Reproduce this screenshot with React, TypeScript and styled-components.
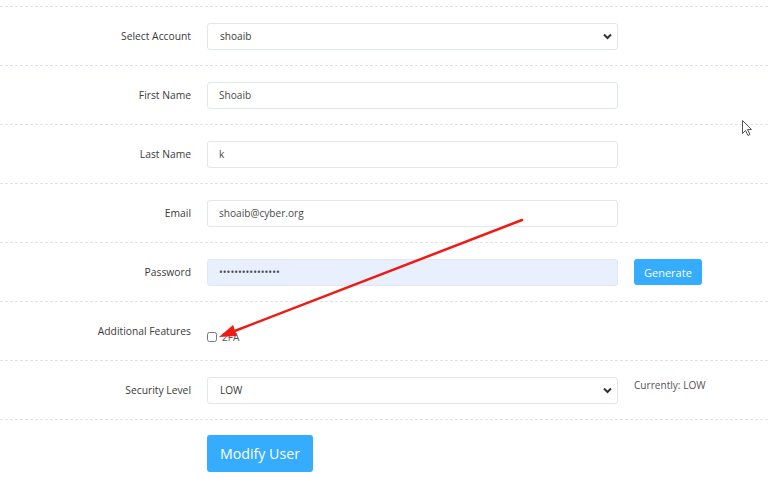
import React, { useState } from 'react';
import styled, { createGlobalStyle } from 'styled-components';

const GlobalStyle = createGlobalStyle`
  html, body {
    margin: 0;
    padding: 0;
    background: #ffffff;
  }
  body {
    font-family: 'Open Sans', 'Noto Sans', sans-serif;
    color: #444;
  }
`;

const Page = styled.div`
  position: relative;
  width: 768px;
  height: 482px;
  overflow: hidden;
  padding-top: 6px;
  box-sizing: border-box;
`;

const Row = styled.div<{ last?: boolean }>`
  display: grid;
  grid-template-columns: 207px 411px 1fr;
  align-items: ${(p) => (p.last ? 'start' : 'center')};
  height: ${(p) => (p.last ? '62px' : '58px')};
  border-top: 1px dashed #dce4ed;
  padding-top: ${(p) => (p.last ? '15px' : '0')};
  box-sizing: content-box;
`;

const Label = styled.label`
  text-align: right;
  padding-right: 16px;
  font-size: 10.3px;
  color: #3a3a3a;
  white-space: nowrap;
`;

const Input = styled.input<{ autofill?: boolean }>`
  box-sizing: border-box;
  width: 411px;
  height: 27px;
  padding: 0 11px;
  border: 1px solid #e1e7ef;
  border-radius: 3px;
  background: ${(p) => (p.autofill ? '#e8f0fe' : '#fff')};
  font-family: inherit;
  font-size: 10.1px;
  color: #4a4a4a;
  outline: none;
`;

const SelectWrap = styled.div`
  position: relative;
  width: 411px;
`;

const Select = styled.select`
  appearance: none;
  box-sizing: border-box;
  width: 100%;
  height: 27px;
  padding: 0 12px;
  border: 1px solid #e1e7ef;
  border-radius: 3px;
  background: #fff;
  font-family: inherit;
  font-size: 10.1px;
  color: #3a3a3a;
  outline: none;
`;

const Chevron = styled.svg`
  position: absolute;
  right: 6px;
  top: 10px;
  pointer-events: none;
`;

const Button = styled.button<{ big?: boolean }>`
  box-sizing: border-box;
  border: none;
  border-radius: 3px;
  background: #35acfe;
  color: #fff;
  font-family: inherit;
  font-size: ${(p) => (p.big ? '14.2px' : '11px')};
  height: ${(p) => (p.big ? '37px' : '26px')};
  padding: ${(p) => (p.big ? '0 13px' : '0 10px')};
  cursor: pointer;
  justify-self: start;
`;

const Extra = styled.div<{ top?: boolean }>`
  padding-left: 16px;
  align-self: ${(p) => (p.top ? 'start' : 'center')};
  padding-top: ${(p) => (p.top ? '17px' : '0')};
  font-size: 10.1px;
  color: #555;
`;

const Check = styled.div`
  display: flex;
  align-items: center;
  gap: 5px;
  margin-top: 11px;
  font-size: 10.1px;
  color: #555;
  input {
    margin: 0;
    width: 10px;
    height: 10px;
  }
`;

const Overlay = styled.svg`
  position: absolute;
  left: 0;
  top: 0;
  pointer-events: none;
`;

function ChevronDown() {
  return (
    <Chevron width="9" height="7" viewBox="0 0 9 7">
      <path d="M1 1.5 L4.5 5 L8 1.5" fill="none" stroke="#333" strokeWidth="2" />
    </Chevron>
  );
}

export default function App() {
  const [account, setAccount] = useState('shoaib');
  const [level, setLevel] = useState('LOW');

  return (
    <Page>
      <GlobalStyle />
      <Row>
        <Label>Select Account</Label>
        <SelectWrap>
          <Select value={account} onChange={(e) => setAccount(e.target.value)}>
            <option value="shoaib">shoaib</option>
          </Select>
          <ChevronDown />
        </SelectWrap>
      </Row>
      <Row>
        <Label>First Name</Label>
        <Input defaultValue="Shoaib" />
      </Row>
      <Row>
        <Label>Last Name</Label>
        <Input defaultValue="k" />
      </Row>
      <Row>
        <Label>Email</Label>
        <Input defaultValue="shoaib@cyber.org" />
      </Row>
      <Row>
        <Label>Password</Label>
        <Input autofill type="password" defaultValue="abcdefghijklmnop" />
        <Extra>
          <Button>Generate</Button>
        </Extra>
      </Row>
      <Row>
        <Label>Additional Features</Label>
        <Check>
          <input type="checkbox" />
          <span>2FA</span>
        </Check>
      </Row>
      <Row>
        <Label>Security Level</Label>
        <SelectWrap>
          <Select value={level} onChange={(e) => setLevel(e.target.value)}>
            <option value="LOW">LOW</option>
            <option value="MEDIUM">MEDIUM</option>
            <option value="HIGH">HIGH</option>
          </Select>
          <ChevronDown />
        </SelectWrap>
        <Extra top>Currently: {level}</Extra>
      </Row>
      <Row last>
        <span />
        <Button big>Modify User</Button>
      </Row>

      {/* annotation arrow + mouse pointer drawn on top of the screenshot */}
      <Overlay width="768" height="482" viewBox="0 0 768 482">
        <line x1="522" y1="220" x2="232" y2="332" stroke="#f01a14" strokeWidth="2.5" strokeLinecap="round" />
        <path d="M219 337 L233 325 L237 336 Z" fill="#f01a14" />
        <path
          d="M742.5 120.5 L742.5 133.5 L745.5 130.5 L748 135.5 L750 134.5 L747.5 129.5 L751.5 129.5 Z"
          fill="#fff"
          stroke="#555"
          strokeWidth="1"
        />
      </Overlay>
    </Page>
  );
}
